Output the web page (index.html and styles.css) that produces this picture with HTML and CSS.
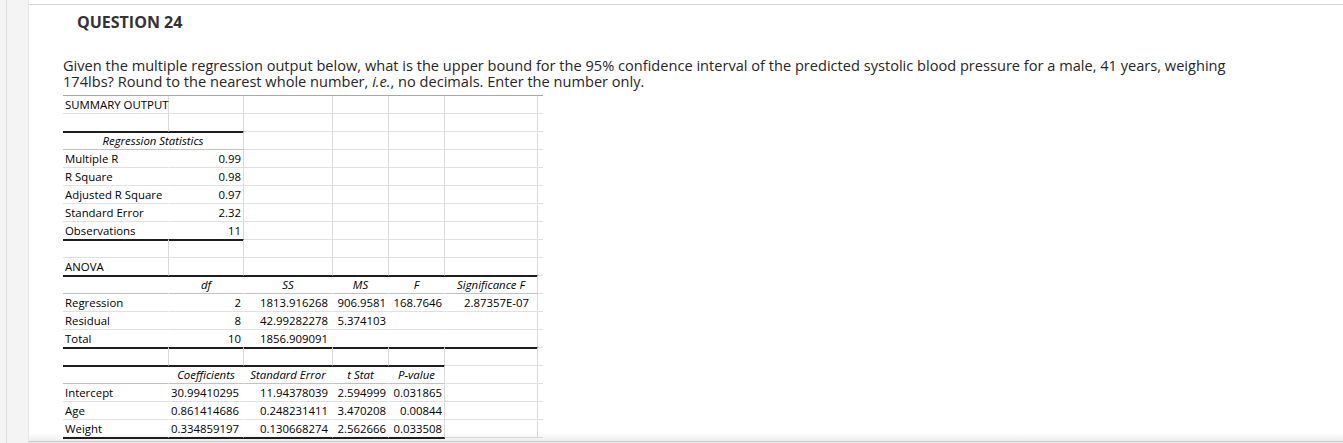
FILE: index.html
```html
<!DOCTYPE html>
<html lang="en">
<head>
<meta charset="utf-8">
<title>Question 24</title>
<link rel="stylesheet" href="styles.css">
</head>
<body>
<div class="rail"><div class="rail-line"></div></div>
<main class="main">
  <section class="panel">
    <h2 class="q-title">QUESTION 24</h2>
    <p class="q-text">Given the multiple regression output below, what is the upper bound for the 95% confidence interval of the predicted systolic blood pressure for a male, 41 years, weighing<br>174lbs? Round to the nearest whole number, <i>i.e.</i>, no decimals. Enter the number only.</p>
    <div class="sheet">
      <!-- row 0 -->
      <div class="cell">SUMMARY OUTPUT</div><div class="cell"></div><div class="cell"></div><div class="cell"></div><div class="cell"></div><div class="cell"></div><div class="cell g"></div>
      <!-- row 1 -->
      <div class="cell tb"></div><div class="cell tb"></div><div class="cell"></div><div class="cell"></div><div class="cell"></div><div class="cell"></div><div class="cell g"></div>
      <!-- row 2 -->
      <div class="cell span2 c hb">Regression Statistics</div><div class="cell"></div><div class="cell"></div><div class="cell"></div><div class="cell"></div><div class="cell g"></div>
      <!-- rows 3-7 -->
      <div class="cell nv">Multiple R</div><div class="cell r">0.99</div><div class="cell"></div><div class="cell"></div><div class="cell"></div><div class="cell"></div><div class="cell g"></div>
      <div class="cell nv">R Square</div><div class="cell r">0.98</div><div class="cell"></div><div class="cell"></div><div class="cell"></div><div class="cell"></div><div class="cell g"></div>
      <div class="cell nv">Adjusted R Square</div><div class="cell r">0.97</div><div class="cell"></div><div class="cell"></div><div class="cell"></div><div class="cell"></div><div class="cell g"></div>
      <div class="cell nv">Standard Error</div><div class="cell r">2.32</div><div class="cell"></div><div class="cell"></div><div class="cell"></div><div class="cell"></div><div class="cell g"></div>
      <div class="cell nv tb">Observations</div><div class="cell r tb">11</div><div class="cell"></div><div class="cell"></div><div class="cell"></div><div class="cell"></div><div class="cell g"></div>
      <!-- row 8 -->
      <div class="cell"></div><div class="cell"></div><div class="cell"></div><div class="cell"></div><div class="cell"></div><div class="cell"></div><div class="cell g"></div>
      <!-- row 9 -->
      <div class="cell tb">ANOVA</div><div class="cell tb"></div><div class="cell tb"></div><div class="cell tb"></div><div class="cell tb"></div><div class="cell tb"></div><div class="cell g"></div>
      <!-- row 10 -->
      <div class="cell nv hb"></div><div class="cell nv c hb">df</div><div class="cell nv c hb">SS</div><div class="cell nv c hb">MS</div><div class="cell nv c hb">F</div><div class="cell c hb">Significance F</div><div class="cell g"></div>
      <!-- rows 11-13 -->
      <div class="cell nv">Regression</div><div class="cell nv r">2</div><div class="cell nv r p4">1813.916268</div><div class="cell nv r">906.9581</div><div class="cell nv r">168.7646</div><div class="cell r p8">2.87357E-07</div><div class="cell g"></div>
      <div class="cell nv">Residual</div><div class="cell nv r">8</div><div class="cell nv r p4">42.99282278</div><div class="cell nv r">5.374103</div><div class="cell nv"></div><div class="cell"></div><div class="cell g"></div>
      <div class="cell nv tb">Total</div><div class="cell nv r tb">10</div><div class="cell nv r p4 tb">1856.909091</div><div class="cell nv tb"></div><div class="cell nv tb"></div><div class="cell tb"></div><div class="cell g"></div>
      <!-- row 14 -->
      <div class="cell tb"></div><div class="cell tb"></div><div class="cell tb"></div><div class="cell tb"></div><div class="cell tb"></div><div class="cell"></div><div class="cell g"></div>
      <!-- row 15 -->
      <div class="cell nv hb"></div><div class="cell nv c hb">Coefficients</div><div class="cell nv c hb">Standard Error</div><div class="cell nv c hb">t Stat</div><div class="cell c hb">P-value</div><div class="cell"></div><div class="cell g"></div>
      <!-- rows 16-18 -->
      <div class="cell nv">Intercept</div><div class="cell nv r p8">30.99410295</div><div class="cell nv r p4">11.94378039</div><div class="cell nv r">2.594999</div><div class="cell r">0.031865</div><div class="cell"></div><div class="cell g"></div>
      <div class="cell nv">Age</div><div class="cell nv r p8">0.861414686</div><div class="cell nv r p4">0.248231411</div><div class="cell nv r">3.470208</div><div class="cell r">0.00844</div><div class="cell"></div><div class="cell g"></div>
      <div class="cell nv tb">Weight</div><div class="cell nv r p8 tb">0.334859197</div><div class="cell nv r p4 tb">0.130668274</div><div class="cell nv r tb">2.562666</div><div class="cell r tb">0.033508</div><div class="cell"></div><div class="cell g"></div>
    </div>
  </section>
  <div class="edge"></div>
</main>
</body>
</html>
```

FILE: styles.css
```css
* { box-sizing: border-box; }

html, body {
  margin: 0;
  height: 443px;
  overflow: hidden;
  background: #fff;
}

body {
  display: flex;
  font-family: "Open Sans", "Liberation Sans", sans-serif;
}

.rail {
  width: 29px;
  flex: none;
  background: #f4f4f4;
  padding-left: 6px;
  border-right: 1px solid #e6e6e6;
}

.rail-line {
  height: 100%;
  border-left: 1px solid #e0e0e0;
}

.main {
  flex: 1;
  padding-top: 4px;
  position: relative;
}

.panel {
  border-top: 1px solid #d4d4d4;
  padding-left: 34px;
  height: 100%;
}

.q-title {
  margin: 6px 0 0 14px;
  font-size: 16px;
  font-weight: 700;
  line-height: 22px;
  color: #333;
}

.q-text {
  margin: 24px 0 0;
  font-size: 14.6px;
  line-height: 16px;
  color: #262626;
}

.sheet {
  margin-top: 6px;
  width: 480px;
  display: grid;
  grid-template-columns: 106px 75px 89px 56px 56px 93px 5px;
  grid-auto-rows: 18px;
  border-top: 1px solid #a8a8a8;
  font-size: 11.4px;
  color: #000;
}

.cell {
  border-right: 1px solid #d9d9d9;
  border-bottom: 1px solid #e0e0e0;
  padding: 0 2px;
  line-height: 17px;
  white-space: nowrap;
}

.nv { border-right-color: transparent; }
.g { border-right: none; }
.hb { border-bottom-color: #c2c2c2; }
.tb {
  border-bottom-color: #1e1e1e;
  box-shadow: 0 1px 0 #1e1e1e;
}
.r { text-align: right; }
.c { text-align: center; font-style: italic; }
.p4 { padding-right: 4px; }
.p8 { padding-right: 8px; }
.span2 { grid-column: span 2; }

.edge {
  position: absolute;
  left: 0;
  right: 0;
  bottom: 0;
  height: 10px;
  background: linear-gradient(to bottom, rgba(0,0,0,0) 0, rgba(0,0,0,0.07) 8px, #cdcdcd 8px, #cdcdcd 9px, #e9e9e9 9px);
}
```
